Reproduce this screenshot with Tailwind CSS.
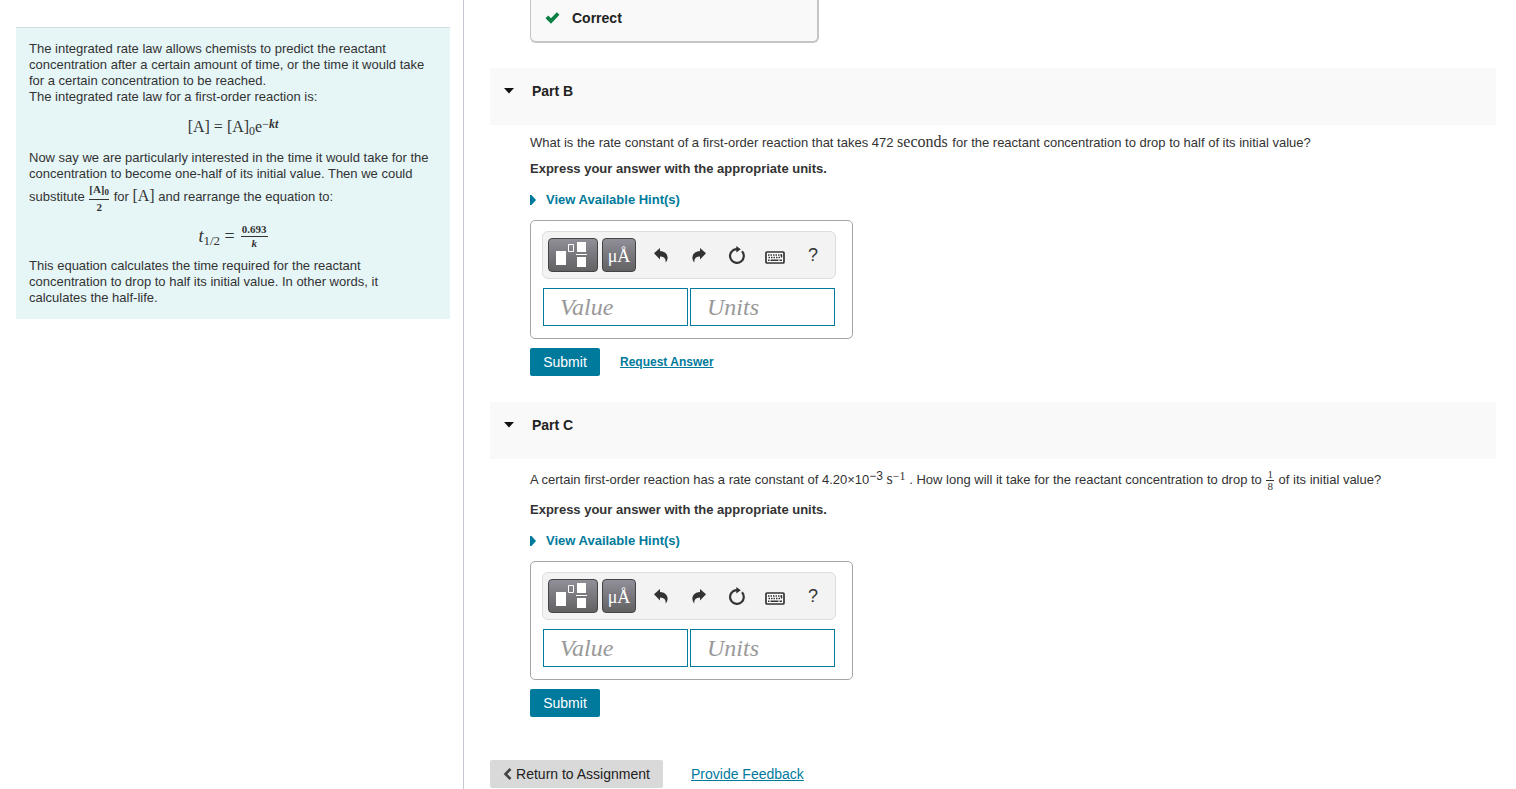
<!doctype html>
<html lang="en">
<head>
    <meta charset="UTF-8">
    <meta name="viewport" content="width=device-width, initial-scale=1.0">
    <title>Integrated Rate Law</title>
    <script src="https://cdn.jsdelivr.net/npm/@tailwindcss/browser@4"></script>
</head>
<body class="bg-white font-['Liberation_Sans',Arial,sans-serif] text-[13px] leading-4 text-[#333]">
    <!-- shared icons -->
    <svg class="hidden">
        <symbol id="icon-template" viewBox="0 0 50 34">
            <path fill="#fff" d="M8 13h10v14H8zM29 4h9v10h-9zM29 19h9v10h-9zM28 16h11v1H28z"/>
            <path fill="none" stroke="#fff" d="M20.500 6.500h5v7h-5z"/>
        </symbol>
        <symbol id="icon-undo" viewBox="0 0 14 16">
            <path fill="#333" d="M0 6.300 6 1v3c4.600.2 7.600 2.900 7.600 6.500 0 2-.7 3.600-2 5 .5-3.800-1.500-5.800-5.600-5.900v3z"/>
        </symbol>
        <symbol id="icon-redo" viewBox="0 0 14 16">
            <path fill="#333" d="M14 6.300 8 1v3C3.400 4.200.4 6.900.4 10.500c0 2 .7 3.600 2 5-.5-3.800 1.500-5.800 5.600-5.900v3z"/>
        </symbol>
        <symbol id="icon-reset" viewBox="0 0 18 20">
            <path fill="none" stroke="#333" stroke-width="2.200" d="M14 6.300A6.900 6.900 0 1 1 5 5.300Q7 4.200 9.500 4.200"/>
            <path fill="#333" d="M8.300 1l4.500 3.200L8.300 7.500z"/>
        </symbol>
        <symbol id="icon-keyboard" viewBox="0 0 20 13">
            <rect x="1" y="1" width="18" height="11" rx="1" fill="#fff" stroke="#333" stroke-width="1.700"/>
            <path stroke="#333" stroke-width="1.500" stroke-dasharray="1.500 1" d="M3 4h14M3.500 6.500h12"/>
            <path stroke="#333" stroke-width="1.500" d="M3 9.300h1.500M5.500 9.300h8M14.500 9.300H17M16.500 3.500v3"/>
        </symbol>
        <symbol id="icon-down" viewBox="0 0 10 6">
            <path fill="#111" d="M0 0h10L5 5.500z"/>
        </symbol>
        <symbol id="icon-right" viewBox="0 0 6 10">
            <path fill="#007a9c" d="M0 0h1.500L6 5l-4.500 5H0z"/>
        </symbol>
    </svg>

    <div class="flex min-h-screen">
        <!-- Introduction -->
        <aside class="w-[464px] shrink-0 border-r border-[#c4c7d0] pl-4 pr-[13px] pt-[27px]">
            <div class="border-t border-[#d2dfdf] bg-[#e6f6f7] px-[13px] pt-[13px] pb-[13px]">
                <p>The integrated rate law allows chemists to predict the reactant concentration after a certain amount of time, or the time it would take for a certain concentration to be reached.</p>
                <p>The integrated rate law for a first-order reaction is:</p>
                <div class="flex h-[45px] items-center justify-center font-['Liberation_Serif',serif] text-base leading-4">
                    <span>[A] = [A]<sub class="text-xs">0</sub>e<sup class="-top-1 text-xs">−<i class="font-bold">kt</i></sup></span>
                </div>
                <p>Now say we are particularly interested in the time it would take for the concentration to become one-half of its initial value. Then we could
                    substitute
                    <span class="mx-px inline-flex flex-col text-center align-middle font-['Liberation_Serif',serif] text-[11px] font-bold leading-[14px]">
                        <span class="border-b border-[#333] pb-[3px]">[A]<sub class="text-[9px]">0</sub></span>
                        <span>2</span>
                    </span>
                    for <span class="font-['Liberation_Serif',serif] text-base leading-4">[A]</span> and rearrange the equation to:</p>
                <div class="flex h-11 items-center justify-center gap-[6px] font-['Liberation_Serif',serif] text-lg leading-4">
                    <span><i>t</i><sub class="text-[13px]">1/2</sub> =</span>
                    <span class="inline-flex flex-col text-center text-[11px] font-bold leading-[13px]">
                        <span class="border-b border-[#333] px-px">0.693</span>
                        <i>k</i>
                    </span>
                </div>
                <p>This equation calculates the time required for the reactant concentration to drop to half its initial value. In other words, it calculates the half-life.</p>
            </div>
        </aside>

        <main class="min-w-0 flex-1 pl-[26px] pr-5">
            <!-- Part A result -->
            <div class="ml-10 flex h-[43px] w-[289px] items-start gap-3 rounded-b-md border-x border-b-2 border-r-2 border-[#c4c4c4] bg-[#f9f9f9] pl-[14px] pt-[10px] text-sm leading-4 font-bold text-[#222]">
                <svg class="mt-px h-[14px] w-[15px]" viewBox="0 0 15 14"><path fill="#0a8043" d="M0.500 7.300 3.200 4.600 6 7.200 11.800 1.200l2.700 2.600L6 12.700z"/></svg>
                <span>Correct</span>
            </div>

            <!-- Part B -->
            <section class="mt-[25px]">
                <h2 class="bg-[#f9f9f9] pt-[15px] pb-[26px] pl-[14px]">
                    <button class="flex items-center gap-[18px] text-sm leading-4 font-bold text-[#222]">
                        <svg class="h-[6px] w-[10px]"><use href="#icon-down"/></svg>Part B
                    </button>
                </h2>
                <div class="pl-10 pt-[9px]">
                    <p>What is the rate constant of a first-order reaction that takes 472 <span class="mr-px font-['Liberation_Serif',serif] text-base leading-4">seconds</span> for the reactant concentration to drop to half of its initial value?</p>
                    <p class="mt-[10px] font-bold">Express your answer with the appropriate units.</p>
                    <button class="mt-[15px] flex items-center gap-[10px] font-bold text-[#007a9c]">
                        <svg class="h-[10px] w-[6px]"><use href="#icon-right"/></svg>View Available Hint(s)
                    </button>
                    <form>
                        <div class="mt-3 w-[323px] rounded-[5px] border border-[#a5a5a5] px-[11px] pt-[10px] pb-3">
                            <div class="flex h-12 w-[294px] items-center rounded-md border border-[#ddd] bg-[#f3f3f3] pl-[5px]">
                                <button type="button" aria-label="Templates" class="h-[34px] w-[50px] rounded-[4px] border border-[#444] bg-linear-to-b from-[#918f98] to-[#626163]">
                                    <svg class="-m-px h-[34px] w-[50px]"><use href="#icon-template"/></svg>
                                </button>
                                <button type="button" aria-label="Symbols" class="mr-[6px] ml-1 h-[34px] w-[34px] rounded-[4px] border border-[#444] bg-linear-to-b from-[#918f98] to-[#626163] pt-[2px] font-['Liberation_Serif',serif] text-lg leading-[30px] text-white">μÅ</button>
                                <button type="button" aria-label="Undo" class="flex w-[38px] justify-center"><svg class="h-4 w-[14px]"><use href="#icon-undo"/></svg></button>
                                <button type="button" aria-label="Redo" class="flex w-[38px] justify-center"><svg class="h-4 w-[14px]"><use href="#icon-redo"/></svg></button>
                                <button type="button" aria-label="Reset" class="flex w-[38px] justify-center"><svg class="h-5 w-[18px]"><use href="#icon-reset"/></svg></button>
                                <button type="button" aria-label="Keyboard" class="flex w-[38px] justify-center pt-1"><svg class="h-[13px] w-5"><use href="#icon-keyboard"/></svg></button>
                                <button type="button" aria-label="Help" class="w-[38px] text-center text-lg leading-5">?</button>
                            </div>
                            <div class="mt-[9px] ml-px flex gap-[2px]">
                                <input type="text" aria-label="Value" placeholder="Value" class="h-[38px] w-[145px] border border-[#007a9c] px-4 font-['Liberation_Serif',serif] text-2xl italic placeholder:text-[#999]">
                                <input type="text" aria-label="Units" placeholder="Units" class="h-[38px] w-[145px] border border-[#007a9c] px-4 font-['Liberation_Serif',serif] text-2xl italic placeholder:text-[#999]">
                            </div>
                        </div>
                        <div class="mt-[9px] flex items-center gap-5">
                            <button type="submit" class="h-7 w-[70px] rounded-[2px] bg-[#007a9c] text-sm text-white">Submit</button>
                            <a href="#" class="text-xs leading-4 font-bold text-[#007a9c] underline">Request Answer</a>
                        </div>
                    </form>
                </div>
            </section>

            <!-- Part C -->
            <section class="mt-[26px]">
                <h2 class="bg-[#f9f9f9] pt-[15px] pb-[26px] pl-[14px]">
                    <button class="flex items-center gap-[18px] text-sm leading-4 font-bold text-[#222]">
                        <svg class="h-[6px] w-[10px]"><use href="#icon-down"/></svg>Part C
                    </button>
                </h2>
                <div class="pl-10 pt-[10px]">
                    <p>A certain first-order reaction has a rate constant of 4.20×10<sup class="-top-1 text-xs">−3</sup> <span class="font-['Liberation_Serif',serif] text-base leading-4">s<sup class="-top-1 text-xs">−1</sup></span> . How long will it take for the reactant concentration to drop to
                        <span class="mx-px inline-flex flex-col text-center align-middle font-['Liberation_Serif',serif] text-[11px] leading-[11px]">
                            <span class="border-b border-[#333] px-px">1</span>
                            <span>8</span>
                        </span>
                        of its initial value?</p>
                    <p class="mt-[10px] font-bold">Express your answer with the appropriate units.</p>
                    <button class="mt-[15px] flex items-center gap-[10px] font-bold text-[#007a9c]">
                        <svg class="h-[10px] w-[6px]"><use href="#icon-right"/></svg>View Available Hint(s)
                    </button>
                    <form>
                        <div class="mt-3 w-[323px] rounded-[5px] border border-[#a5a5a5] px-[11px] pt-[10px] pb-3">
                            <div class="flex h-12 w-[294px] items-center rounded-md border border-[#ddd] bg-[#f3f3f3] pl-[5px]">
                                <button type="button" aria-label="Templates" class="h-[34px] w-[50px] rounded-[4px] border border-[#444] bg-linear-to-b from-[#918f98] to-[#626163]">
                                    <svg class="-m-px h-[34px] w-[50px]"><use href="#icon-template"/></svg>
                                </button>
                                <button type="button" aria-label="Symbols" class="mr-[6px] ml-1 h-[34px] w-[34px] rounded-[4px] border border-[#444] bg-linear-to-b from-[#918f98] to-[#626163] pt-[2px] font-['Liberation_Serif',serif] text-lg leading-[30px] text-white">μÅ</button>
                                <button type="button" aria-label="Undo" class="flex w-[38px] justify-center"><svg class="h-4 w-[14px]"><use href="#icon-undo"/></svg></button>
                                <button type="button" aria-label="Redo" class="flex w-[38px] justify-center"><svg class="h-4 w-[14px]"><use href="#icon-redo"/></svg></button>
                                <button type="button" aria-label="Reset" class="flex w-[38px] justify-center"><svg class="h-5 w-[18px]"><use href="#icon-reset"/></svg></button>
                                <button type="button" aria-label="Keyboard" class="flex w-[38px] justify-center pt-1"><svg class="h-[13px] w-5"><use href="#icon-keyboard"/></svg></button>
                                <button type="button" aria-label="Help" class="w-[38px] text-center text-lg leading-5">?</button>
                            </div>
                            <div class="mt-[9px] ml-px flex gap-[2px]">
                                <input type="text" aria-label="Value" placeholder="Value" class="h-[38px] w-[145px] border border-[#007a9c] px-4 font-['Liberation_Serif',serif] text-2xl italic placeholder:text-[#999]">
                                <input type="text" aria-label="Units" placeholder="Units" class="h-[38px] w-[145px] border border-[#007a9c] px-4 font-['Liberation_Serif',serif] text-2xl italic placeholder:text-[#999]">
                            </div>
                        </div>
                        <button type="submit" class="mt-[9px] block h-7 w-[70px] rounded-[2px] bg-[#007a9c] text-sm text-white">Submit</button>
                    </form>
                </div>
            </section>

            <!-- Footer actions -->
            <div class="mt-[43px] flex items-center gap-7 text-sm leading-4">
                <button class="flex h-7 w-[173px] items-center justify-center gap-1 rounded-[2px] bg-[#d9d9d9] text-[#222]">
                    <svg class="h-3 w-[9px]" viewBox="0 0 9 12"><path fill="none" stroke="#444" stroke-width="2.600" d="M7.500 1 2.500 6l5 5"/></svg>
                    Return to Assignment
                </button>
                <a href="#" class="text-[#007a9c] underline">Provide Feedback</a>
            </div>
        </main>
    </div>
</body>
</html>
